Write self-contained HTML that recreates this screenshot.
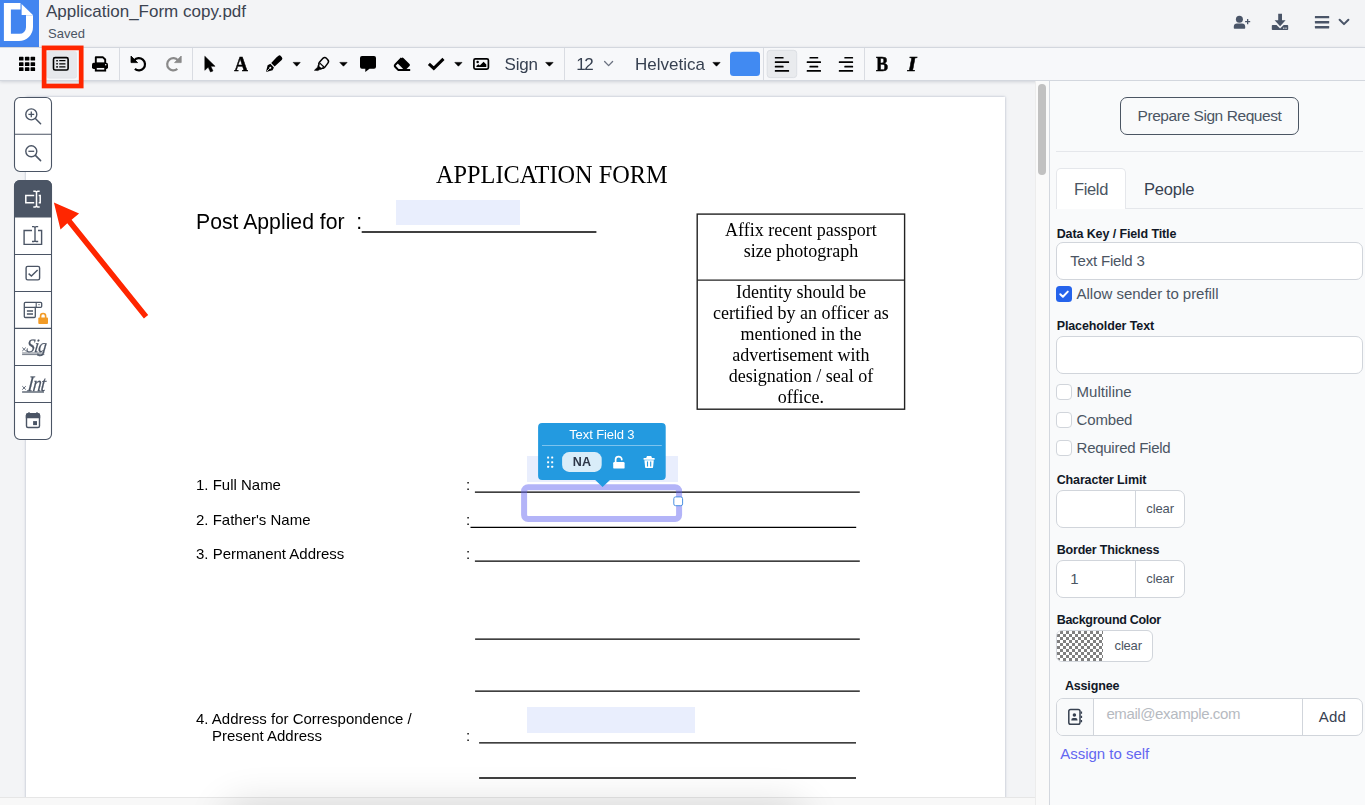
<!DOCTYPE html>
<html><head><meta charset="utf-8"><title>Application_Form copy.pdf</title>
<style>
*{box-sizing:border-box;margin:0;padding:0}
html,body{width:1365px;height:805px;overflow:hidden;background:#f3f4f6;font-family:"Liberation Sans",sans-serif;color:#374151}
svg{display:block;overflow:visible}
.a{position:absolute}
#hdr{position:absolute;left:0;top:0;width:1365px;height:47px;background:#f3f4f6}
#logo{position:absolute;left:0;top:0;width:39px;height:46.5px;background:#4285f0}
#title{position:absolute;left:46px;top:0px;font-size:17px;line-height:24px;color:#3b4351;white-space:nowrap}
#saved{position:absolute;left:48px;top:26.2px;font-size:13px;line-height:16px;color:#4b5563;white-space:nowrap}
#tb{z-index:5;position:absolute;left:0;top:47px;width:1365px;height:34px;background:#f7f8fa;border-top:1px solid #d3d7de;border-bottom:1px solid #d3d7de;box-shadow:0 1px 3px rgba(100,110,130,.25)}
.sep{position:absolute;top:0;width:1px;height:32px;background:#d9dce2}
.ic{position:absolute}
.tt{position:absolute;font-size:17px;line-height:20px;color:#374151;white-space:nowrap}
#main{position:absolute;left:0;top:81px;width:1035px;height:716px;background:#f3f4f6;overflow:hidden}
#page{position:absolute;left:26px;top:16px;width:979px;height:720px;background:#fff;box-shadow:0 0 2.5px rgba(110,120,150,.55)}
#vtrack{z-index:6;position:absolute;left:1035px;top:81px;width:14px;height:724px;background:#fafafa;border-left:1px solid #ececec}
#vthumb{z-index:7;position:absolute;left:1038px;top:84px;width:8px;height:91px;border-radius:4px;background:#c1c1c1}
#htrack{position:absolute;left:0;top:797px;width:1035px;height:8px;background:#f8f8f8;border-top:1px solid #e6e6e6}
#side{z-index:6;position:absolute;left:1049px;top:81px;width:316px;height:724px;background:#f9fafb;border-left:1px solid #d3d7de}
.doc{position:absolute;color:#000;white-space:nowrap;font-size:15px;line-height:18px}
.serif{font-family:"Liberation Serif",serif}
.ul{position:absolute;height:1.3px;background:#111}
</style></head><body>
<div id="hdr">
 <div id="logo"><svg width="39" height="47" viewBox="0 0 39 47"><path fill="#fff" d="M3.9 3H20.5V9.4H10.9V33.8H19.5A6.5 6.5 0 0 0 26 27.3V15.2H33V27A14 14 0 0 1 19 41H3.9Z"/><path fill="#fff" d="M21.6 4.1L32.9 14.9H21.6Z"/></svg></div>
 <div id="title">Application_Form copy.pdf</div>
 <div id="saved">Saved</div>
 <svg class="a" style="left:0;top:0" width="1365" height="47" viewBox="0 0 1365 47" fill="#4a5568">
  <circle cx="1239.4" cy="19.3" r="3.5"/>
  <path d="M1233.8 28.1V26.6A3.2 3.2 0 0 1 1237 23.5H1241.9A3.2 3.2 0 0 1 1245.2 26.6V28.1A.7.7 0 0 1 1244.5 28.8H1234.5A.7.7 0 0 1 1233.8 28.1Z"/>
  <path d="M1247 19.1H1248.3V21H1250.2V22.3H1248.3V24.2H1247V22.3H1245.1V21H1247Z"/>
  <path d="M1278.2 13.8H1282V20.2H1285.6L1280.1 26.3L1274.6 20.2H1278.2Z"/>
  <path d="M1272.6 25H1276.5L1280.1 28.4L1283.7 25H1287.4A.8.8 0 0 1 1288.2 25.8V29.3A.8.8 0 0 1 1287.4 30.1H1272.6A.8.8 0 0 1 1271.8 29.3V25.8A.8.8 0 0 1 1272.6 25Z"/>
  <rect x="1283.2" y="27.6" width="1.2" height="1.2" fill="#f3f4f6"/><rect x="1285.4" y="27.6" width="1.2" height="1.2" fill="#f3f4f6"/>
  <rect x="1314.9" y="15.9" width="14.3" height="2.4" rx=".4"/><rect x="1314.9" y="21" width="14.3" height="2.4" rx=".4"/><rect x="1314.9" y="26.1" width="14.3" height="2.4" rx=".4"/>
  <path d="M1339.6 19.7L1344 24.1L1348.4 19.7" fill="none" stroke="#4a5568" stroke-width="2" stroke-linecap="round" stroke-linejoin="round"/>
 </svg>
</div>
<div id="tb">
<div class="sep" style="left:119px"></div><div class="sep" style="left:192px"></div><div class="sep" style="left:564px"></div><div class="sep" style="left:763px"></div><div class="sep" style="left:864px"></div><svg class="a" style="left:0;top:-48px" width="1365" height="100" viewBox="0 0 1365 100"><rect x="46.6" y="51.8" width="30.4" height="26.6" rx="3" fill="#d4d7dd" opacity=".7"/><rect x="46.6" y="51" width="30.4" height="26.8" rx="3" fill="#e6e8ec"/>
<rect x="767.2" y="50.3" width="29.5" height="27.3" rx="3" fill="#e9ebee" stroke="#dcdfe4" stroke-width="1"/>
<rect x="19" y="56.8" width="4.5" height="3.8" rx=".6" fill="#000"/>
<rect x="19" y="62.2" width="4.5" height="3.8" rx=".6" fill="#000"/>
<rect x="19" y="67.3" width="4.5" height="3.8" rx=".6" fill="#000"/>
<rect x="24.9" y="56.8" width="4.5" height="3.8" rx=".6" fill="#000"/>
<rect x="24.9" y="62.2" width="4.5" height="3.8" rx=".6" fill="#000"/>
<rect x="24.9" y="67.3" width="4.5" height="3.8" rx=".6" fill="#000"/>
<rect x="30.6" y="56.8" width="4.5" height="3.8" rx=".6" fill="#000"/>
<rect x="30.6" y="62.2" width="4.5" height="3.8" rx=".6" fill="#000"/>
<rect x="30.6" y="67.3" width="4.5" height="3.8" rx=".6" fill="#000"/>
<rect x="53.5" y="57.6" width="14.6" height="12.4" rx="1.6" fill="none" stroke="#000" stroke-width="1.6"/>
<rect x="56.2" y="59.900000000000006" width="1.7" height="1.6" rx=".4" fill="#000"/><rect x="59.2" y="60.050000000000004" width="6.3" height="1.3" rx=".3" fill="#000"/>
<rect x="56.2" y="63.0" width="1.7" height="1.6" rx=".4" fill="#000"/><rect x="59.2" y="63.15" width="6.3" height="1.3" rx=".3" fill="#000"/>
<rect x="56.2" y="66.10000000000001" width="1.7" height="1.6" rx=".4" fill="#000"/><rect x="59.2" y="66.25" width="6.3" height="1.3" rx=".3" fill="#000"/>
<path d="M95.8 57.3H103L105.2 59.5V63.5H95.8Z" fill="#f7f8fa" stroke="#000" stroke-width="1.9" stroke-linejoin="round"/>
<rect x="92" y="62.8" width="16" height="6.1" rx="1.7" fill="#000"/>
<rect x="95.8" y="67" width="9.4" height="3.6" fill="#f7f8fa" stroke="#000" stroke-width="1.9"/>
<circle cx="105.7" cy="64.8" r=".75" fill="#f7f8fa"/>
<path d="M134.2 60.4A6.1 6.1 0 1 1 134.9 68.9" fill="none" stroke="#000" stroke-width="2.2" stroke-linecap="butt"/>
<path d="M131 56V62.6H137.6Z" fill="#000" stroke="#000" stroke-width=".8" stroke-linejoin="round"/>
<path d="M178 60.4A6.1 6.1 0 1 0 177.3 68.9" fill="none" stroke="#8a8a8a" stroke-width="2.2"/>
<path d="M181.2 56V62.6H174.6Z" fill="#8a8a8a" stroke="#8a8a8a" stroke-width=".8" stroke-linejoin="round"/>
<path d="M204.8 56.2V70.3L208.2 67.2L210.5 72L213 70.9L210.8 66.3H215.1Z" fill="#000" stroke="#000" stroke-width=".5" stroke-linejoin="round"/>
<path d="M276.6 57.2L278.2 55.9A2 2 0 0 1 281 56.2L281.9 57.3A2 2 0 0 1 281.7 60L274.6 66.6L271.2 63Z" fill="#000"/>
<path d="M270.4 63.8L273.9 67.4L272.6 70.3L266 72L267.6 65.3Z" fill="#000"/>
<path d="M266.6 71.4L269.8 68.2" stroke="#f7f8fa" stroke-width=".8"/><circle cx="270.3" cy="67.7" r="1" fill="#f7f8fa"/>
<path d="M293.2 62.4H300.2L296.7 66.2Z" fill="#000" stroke="#000" stroke-width=".6" stroke-linejoin="round"/>
<path d="M323.2 58.1L319.2 62.6A1.5 1.5 0 0 0 319 64.4L318.2 66.4L320.9 68.9L322.8 68A1.5 1.5 0 0 0 324.5 67.6L327.9 63.1A2.6 2.6 0 0 0 327.6 59.6L326.6 58.5A2.4 2.4 0 0 0 323.2 58.1Z" fill="none" stroke="#000" stroke-width="1.5" stroke-linejoin="round"/>
<path d="M318.6 66.2L321.2 68.7L317.8 70.6L314.4 70.3Z" fill="#000" stroke="#000" stroke-width=".6" stroke-linejoin="round"/>
<path d="M319.6 62.9L324.2 67.3" stroke="#000" stroke-width="1.2"/>
<path d="M339.8 62.4H347.1L343.45000000000005 66.2Z" fill="#000" stroke="#000" stroke-width=".6" stroke-linejoin="round"/>
<path d="M362 56H374A2 2 0 0 1 376 58V66.7A2 2 0 0 1 374 68.7H369.5L365.3 71.9V68.7H362A2 2 0 0 1 360 66.7V58A2 2 0 0 1 362 56Z" fill="#000"/>
<path d="M401.5 58.3L395.2 64.8A1.4 1.4 0 0 0 395.2 66.8L398.2 69.9H410.2" fill="none" stroke="#000" stroke-width="2" stroke-linejoin="round"/>
<path d="M401.4 57.9A1.4 1.4 0 0 1 403.4 57.9L409.5 64A1.4 1.4 0 0 1 409.5 66L405.5 69.9L397.4 62Z" fill="#000"/>
<path d="M397.6 62.3L405 69.6" stroke="#000" stroke-width="1.6"/>
<path d="M430 64.9L433.8 68.4L442.4 59.9" fill="none" stroke="#000" stroke-width="3" stroke-linejoin="miter" stroke-linecap="square"/>
<path d="M454.8 62.4H462L458.4 66.2Z" fill="#000" stroke="#000" stroke-width=".6" stroke-linejoin="round"/>
<rect x="473.9" y="58.8" width="14.5" height="10.3" rx="1.5" fill="none" stroke="#000" stroke-width="1.7"/>
<circle cx="477.6" cy="62" r="1.25" fill="#000"/><path d="M476.4 67.1V65.9L478.3 64.2L479.8 65.6L483.6 61.8L486.3 64.5V67.1Z" fill="#000"/>
<path d="M545.7 62.4H553.1L549.4000000000001 66.2Z" fill="#000" stroke="#000" stroke-width=".6" stroke-linejoin="round"/>
<path d="M604.6 61.5L608.6 65.6L612.6 61.5" fill="none" stroke="#6b7280" stroke-width="1.3" stroke-linecap="round" stroke-linejoin="round"/>
<path d="M712.9 62.4H720.1L716.5 66.2Z" fill="#000" stroke="#000" stroke-width=".6" stroke-linejoin="round"/>
<rect x="730" y="51.8" width="30" height="24.2" rx="3.5" fill="#418af2"/>
<rect x="774.80" y="56.9" width="8.8" height="1.7" rx=".5" fill="#000"/><rect x="774.80" y="61.3" width="14.3" height="1.7" rx=".5" fill="#000"/><rect x="774.80" y="65.7" width="8.8" height="1.7" rx=".5" fill="#000"/><rect x="774.80" y="70.0" width="14.3" height="1.7" rx=".5" fill="#000"/>
<rect x="809.45" y="56.9" width="8.8" height="1.7" rx=".5" fill="#000"/><rect x="806.70" y="61.3" width="14.3" height="1.7" rx=".5" fill="#000"/><rect x="809.45" y="65.7" width="8.8" height="1.7" rx=".5" fill="#000"/><rect x="806.70" y="70.0" width="14.3" height="1.7" rx=".5" fill="#000"/>
<rect x="844.30" y="56.9" width="8.8" height="1.7" rx=".5" fill="#000"/><rect x="838.80" y="61.3" width="14.3" height="1.7" rx=".5" fill="#000"/><rect x="844.30" y="65.7" width="8.8" height="1.7" rx=".5" fill="#000"/><rect x="838.80" y="70.0" width="14.3" height="1.7" rx=".5" fill="#000"/></svg><div class="tt" style="left:504.6px;top:6.5px;letter-spacing:-.25px">Sign</div>
<div class="tt" style="left:576.3px;top:6.5px;letter-spacing:-1.6px">12</div>
<div class="tt" style="left:635px;top:6.5px">Helvetica</div>
<div class="a serif" style="left:233px;top:3px;font-size:21px;line-height:26px;font-weight:bold;color:#000;width:16px;text-align:center;-webkit-text-stroke:.5px #000;transform:scaleX(.9)">A</div>
<div class="a serif" style="left:874px;top:3px;font-size:21px;line-height:26px;font-weight:bold;color:#000;width:16px;text-align:center;-webkit-text-stroke:.5px #000;transform:scaleX(.86)">B</div>
<div class="a serif" style="left:904px;top:3px;font-size:21px;line-height:26px;font-weight:bold;font-style:italic;color:#000;width:16px;text-align:center;-webkit-text-stroke:.5px #000;transform:scaleX(1.1)">I</div>
</div>
<div id="main">
 <div id="page">
<div id="pc" class="a" style="left:-26px;top:-97px;width:0;height:0;will-change:transform">
<div class="a" style="left:396px;top:199.5px;width:124.2px;height:25.5px;background:#e9eefd"></div>
<div class="a" style="left:527px;top:456px;width:151px;height:25.7px;background:#e9eefd"></div>
<div class="a" style="left:527px;top:707px;width:168px;height:25.5px;background:#e9eefd"></div>
<div class="doc serif" id="t1" style="left:436px;top:163.00px;font-size:24.3px;line-height:24.3px;">APPLICATION FORM</div>
<div class="doc " id="t2" style="transform:scaleX(.976);transform-origin:0 50%;left:196.1px;top:211.48px;font-size:21.74px;line-height:21.74px;">Post Applied for&nbsp; :</div>
<svg class="a" style="left:0;top:0" width="1000" height="805" viewBox="0 0 1000 805"><path d="M361.7 231.95H596.4" stroke="#000" stroke-width="1.6"/><path d="M474.9 492.10H859.8" stroke="#000" stroke-width="1.3"/><path d="M470.5 527.40H856.2" stroke="#000" stroke-width="1.3"/><path d="M474.9 561.10H859.8" stroke="#000" stroke-width="1.3"/><path d="M475.1 639.15H859.8" stroke="#000" stroke-width="1.3"/><path d="M475.1 691.10H859.8" stroke="#000" stroke-width="1.3"/><path d="M479.1 742.90H856.0" stroke="#000" stroke-width="1.3"/><path d="M479.1 778.00H856.0" stroke="#000" stroke-width="1.3"/></svg>
<svg class="a" style="left:690px;top:205px" width="225" height="215" viewBox="690 205 225 215"><rect x="697.2" y="214.1" width="207.4" height="195.1" fill="none" stroke="#222" stroke-width="1.4"/><path d="M697.2 280.2H904.6" stroke="#222" stroke-width="1.3"/></svg>

<div class="doc serif bx" style="left:696.5px;width:208.8px;text-align:center;top:220.73px;font-size:18px;line-height:18px">Affix recent passport</div>
<div class="doc serif bx" style="left:696.5px;width:208.8px;text-align:center;top:241.62px;font-size:18px;line-height:18px">size photograph</div>
<div class="doc serif bx" style="left:696.5px;width:208.8px;text-align:center;top:283.32px;font-size:18px;line-height:18px">Identity should be</div>
<div class="doc serif bx" style="left:696.5px;width:208.8px;text-align:center;top:304.23px;font-size:18px;line-height:18px">certified by an officer as</div>
<div class="doc serif bx" style="left:696.5px;width:208.8px;text-align:center;top:325.12px;font-size:18px;line-height:18px">mentioned in the</div>
<div class="doc serif bx" style="left:696.5px;width:208.8px;text-align:center;top:346.03px;font-size:18px;line-height:18px">advertisement with</div>
<div class="doc serif bx" style="left:696.5px;width:208.8px;text-align:center;top:366.93px;font-size:18px;line-height:18px">designation / seal of</div>
<div class="doc serif bx" style="left:696.5px;width:208.8px;text-align:center;top:387.82px;font-size:18px;line-height:18px">office.</div>
<div class="doc " id="t3" style="transform:scaleX(.966);transform-origin:0 50%;left:196.2px;top:476.66px;font-size:15.52px;line-height:15.52px;">1. Full Name</div>
<div class="doc " id="t4" style="transform:scaleX(.966);transform-origin:0 50%;left:195.7px;top:512.36px;font-size:15.52px;line-height:15.52px;">2. Father's Name</div>
<div class="doc " id="t5" style="transform:scaleX(.966);transform-origin:0 50%;left:195.7px;top:546.36px;font-size:15.52px;line-height:15.52px;">3. Permanent Address</div>
<div class="doc " id="t6" style="transform:scaleX(.966);transform-origin:0 50%;left:195.5px;top:710.96px;font-size:15.52px;line-height:15.52px;">4. Address for Correspondence /</div>
<div class="doc " id="t7" style="transform:scaleX(.966);transform-origin:0 50%;left:212.2px;top:727.66px;font-size:15.52px;line-height:15.52px;">Present Address</div>
<div class="doc "  style="transform:scaleX(.966);transform-origin:0 50%;left:465.9px;top:476.66px;font-size:15.52px;line-height:15.52px;">:</div>
<div class="doc "  style="transform:scaleX(.966);transform-origin:0 50%;left:465.9px;top:512.36px;font-size:15.52px;line-height:15.52px;">:</div>
<div class="doc "  style="transform:scaleX(.966);transform-origin:0 50%;left:465.9px;top:546.36px;font-size:15.52px;line-height:15.52px;">:</div>
<div class="doc "  style="transform:scaleX(.966);transform-origin:0 50%;left:465.9px;top:727.66px;font-size:15.52px;line-height:15.52px;">:</div>
</div>
 </div>
<svg class="a" style="left:0;top:-81px" width="200" height="805" viewBox="0 0 200 805"><rect x="14.5" y="97.5" width="37" height="74" rx="5.5" fill="#fff" stroke="#4b5565" stroke-width="1.1"/>
<path d="M14.5 134.2H51.5" stroke="#4b5565" stroke-width="1.1"/>
<circle cx="31.3" cy="114.4" r="5.5" fill="none" stroke="#4b5565" stroke-width="1.4"/><path d="M35.4 118.5L40.6 123.7" stroke="#4b5565" stroke-width="1.5" stroke-linecap="round"/>
<path d="M28.4 114.4H34.2" stroke="#4b5565" stroke-width="1.3"/>
<circle cx="31.3" cy="151.3" r="5.5" fill="none" stroke="#4b5565" stroke-width="1.4"/><path d="M35.4 155.4L40.6 160.60000000000002" stroke="#4b5565" stroke-width="1.5" stroke-linecap="round"/>
<path d="M28.4 151.3H34.2" stroke="#4b5565" stroke-width="1.3"/>
<path d="M31.3 111.5V117.3" stroke="#4b5565" stroke-width="1.3"/>
<rect x="14.5" y="180.5" width="37" height="259" rx="5.5" fill="#fff" stroke="#4b5565" stroke-width="1.1"/>
<path d="M14 217.5V186A6 6 0 0 1 20 180H46A6 6 0 0 1 52 186V217.5Z" fill="#4b5565"/>
<path d="M14.5 254.5H51.5" stroke="#4b5565" stroke-width="1.1"/>
<path d="M14.5 291.5H51.5" stroke="#4b5565" stroke-width="1.1"/>
<path d="M14.5 328.4H51.5" stroke="#4b5565" stroke-width="1.1"/>
<path d="M14.5 365.5H51.5" stroke="#4b5565" stroke-width="1.1"/>
<path d="M14.5 402.5H51.5" stroke="#4b5565" stroke-width="1.1"/>
<path d="M34.2 195.4H25.8V202.7H34.2M38.7 195.4H40.2V202.7H38.7" fill="none" stroke="#fff" stroke-width="1.5"/>
<path d="M36.5 191.6V206.6M33.3 191.3H35.3Q36.5 191.5 36.5 192.6Q36.5 191.5 37.7 191.3H39.7M33.3 206.9H35.3Q36.5 206.7 36.5 205.6Q36.5 206.7 37.7 206.9H39.7" fill="none" stroke="#fff" stroke-width="1.5"/>
<path d="M32 230.5H24.1V244.4H41.6V230.5H38" fill="none" stroke="#4b5565" stroke-width="1.4"/>
<path d="M35 226.9V241.2M32 226.6H33.9Q35 226.8 35 227.9Q35 226.8 36.1 226.6H38.2M32 241.5H33.9Q35 241.3 35 240.2Q35 241.3 36.1 241.5H38.2" fill="none" stroke="#4b5565" stroke-width="1.4"/>
<rect x="26.1" y="266.4" width="13.5" height="13.5" rx="1.6" fill="none" stroke="#4b5565" stroke-width="1.4"/><path d="M28.6 273.6L31.4 276L37.6 269.9" fill="none" stroke="#4b5565" stroke-width="1.4"/>
<path d="M25.4 302.3H40.6A1.1 1.1 0 0 1 41.7 303.4V306.3A1.1 1.1 0 0 1 40.6 307.4H35.3V316.4A1.1 1.1 0 0 1 34.2 317.5H25.4A1.1 1.1 0 0 1 24.3 316.4V303.4A1.1 1.1 0 0 1 25.4 302.3Z" fill="none" stroke="#4b5565" stroke-width="1.3"/>
<path d="M24.3 307.4H35.3M36.2 302.3V307.4" stroke="#4b5565" stroke-width="1.1"/><path d="M26.9 311H33M26.9 314H33" stroke="#4b5565" stroke-width="1.4"/><path d="M38 304.2H40L39 305.6Z" fill="#4b5565"/>
<rect x="38.3" y="317.5" width="9.7" height="6.4" rx=".9" fill="#f29b26"/><path d="M40.6 318V316A2.5 2.5 0 0 1 45.6 316V318" fill="none" stroke="#f29b26" stroke-width="1.6"/>
<path d="M22.1 353H44.3M22.1 354.6H44.3" stroke="#4b5565" stroke-width=".8"/>
<path d="M22.1 392H44" stroke="#4b5565" stroke-width="1.3"/>
<path d="M22.3 347.6L25.8 351M25.8 347.6L22.3 351M22.3 386.2L25.8 389.6M25.8 386.2L22.3 389.6" stroke="#4b5565" stroke-width=".9"/>
<rect x="26.5" y="414" width="13" height="13.5" rx="1.5" fill="none" stroke="#4b5565" stroke-width="1.4"/><path d="M26.5 417.6V415.2A1.4 1.4 0 0 1 27.9 413.8H38.1A1.4 1.4 0 0 1 39.5 415.2V417.6Z" fill="#4b5565" stroke="#4b5565" stroke-width="1.4"/><path d="M29 412.2V415M37 412.2V415" stroke="#4b5565" stroke-width="1.5"/><rect x="33.1" y="421.1" width="3.9" height="4" fill="#4b5565"/></svg><div class="a serif" style="left:25.6px;top:255.2px;font-size:19px;line-height:20px;font-style:italic;color:#4b5565;letter-spacing:-.7px;white-space:nowrap;transform:scaleX(.88) skewX(-8deg);transform-origin:0 80%;-webkit-text-stroke:.25px #4b5565">Sig</div><div class="a serif" style="left:26.6px;top:291.6px;font-size:22px;line-height:22px;font-style:italic;color:#4b5565;letter-spacing:-.8px;white-space:nowrap;transform:scaleX(.8) skewX(-8deg);transform-origin:0 80%;-webkit-text-stroke:.25px #4b5565">Int</div>
</div>
<div id="htrack"></div>
<div id="botsh" class="a" style="left:235px;top:814px;width:560px;height:30px;border-radius:8px;box-shadow:0 0 40px 10px rgba(0,0,0,.14);z-index:9"></div>
<div id="vtrack"></div><div id="vthumb"></div>
<div id="side">
<!--SIDE--><div class="a" style="left:-1050px;top:-81px;width:0;height:0">
<div class="a" style="left:1120px;top:97px;width:179.0px;height:38.0px;border:1px solid #4b5563;border-radius:7px;background:#f9fafb"></div>
<div class="a st" id="s1" style="left:1137.5px;top:108.08px;font-size:15.5px;line-height:15.5px;font-weight:normal;color:#4b5563;white-space:nowrap;letter-spacing:-0.43px">Prepare Sign Request</div>
<div class="a" style="left:1056px;top:150.7px;width:307.0px;height:1.0px;background:#e5e7eb"></div>
<div class="a" style="left:1056px;top:208.4px;width:307.0px;height:1.0px;background:#e5e7eb"></div>
<div class="a" style="left:1056px;top:168px;width:70.0px;height:41.4px;background:#fff;border:1px solid #e5e7eb;border-bottom:none;border-radius:5px 5px 0 0"></div>
<div class="a st" id="s2" style="left:1074px;top:180.93px;font-size:16.5px;line-height:16.5px;font-weight:normal;color:#4b5563;white-space:nowrap;letter-spacing:-0.35px">Field</div>
<div class="a st" id="s3" style="left:1144px;top:180.93px;font-size:16.5px;line-height:16.5px;font-weight:normal;color:#374151;white-space:nowrap;letter-spacing:-0.17px">People</div>
<div class="a st" id="s4" style="left:1056.7px;top:228.32px;font-size:12.5px;line-height:12.5px;font-weight:bold;color:#111827;white-space:nowrap;letter-spacing:-0.11px">Data Key / Field Title</div>
<div class="a" style="left:1056px;top:242px;width:307.0px;height:38.0px;background:#fff;border:1px solid #d1d5db;border-radius:7px"></div>
<div class="a st" id="s5" style="left:1070.3px;top:253.20px;font-size:15px;line-height:15px;font-weight:normal;color:#4b5563;white-space:nowrap;letter-spacing:-0.20px">Text Field 3</div>
<div class="a" style="left:1056px;top:286px;width:16px;height:16px;background:#2563eb;border-radius:3.5px"><svg width="16" height="16" viewBox="0 0 16 16"><path d="M4.3 8.2L6.9 10.7L11.8 5.6" fill="none" stroke="#fff" stroke-width="2" stroke-linecap="round" stroke-linejoin="round"/></svg></div>
<div class="a st" id="s6" style="left:1076.6px;top:286.20px;font-size:15px;line-height:15px;font-weight:normal;color:#4b5563;white-space:nowrap;letter-spacing:-0.03px">Allow sender to prefill</div>
<div class="a st" id="s7" style="left:1056.7px;top:320.22px;font-size:12.5px;line-height:12.5px;font-weight:bold;color:#111827;white-space:nowrap;letter-spacing:-0.11px">Placeholder Text</div>
<div class="a" style="left:1056px;top:336px;width:307.0px;height:38.0px;background:#fff;border:1px solid #d1d5db;border-radius:7px"></div>
<div class="a" style="left:1056px;top:384px;width:16.0px;height:16.0px;background:#fff;border:1px solid #d1d5db;border-radius:4px"></div>
<div class="a st" id="s8" style="left:1076.6px;top:383.90px;font-size:15px;line-height:15px;font-weight:normal;color:#4b5563;white-space:nowrap;letter-spacing:0.01px">Multiline</div>
<div class="a" style="left:1056px;top:412px;width:16.0px;height:16.0px;background:#fff;border:1px solid #d1d5db;border-radius:4px"></div>
<div class="a st" id="s9" style="left:1076.6px;top:411.90px;font-size:15px;line-height:15px;font-weight:normal;color:#4b5563;white-space:nowrap;letter-spacing:-0.18px">Combed</div>
<div class="a" style="left:1056px;top:440px;width:16.0px;height:16.0px;background:#fff;border:1px solid #d1d5db;border-radius:4px"></div>
<div class="a st" id="s10" style="left:1076.6px;top:439.90px;font-size:15px;line-height:15px;font-weight:normal;color:#4b5563;white-space:nowrap;letter-spacing:-0.27px">Required Field</div>
<div class="a st" id="s11" style="left:1056.7px;top:474.32px;font-size:12.5px;line-height:12.5px;font-weight:bold;color:#111827;white-space:nowrap;letter-spacing:-0.14px">Character Limit</div>
<div class="a" style="left:1056px;top:490px;width:129.0px;height:38.0px;background:#fff;border:1px solid #d1d5db;border-radius:7px"></div>
<div class="a" style="left:1135px;top:490px;width:1.0px;height:38.0px;background:#d1d5db"></div>
<div class="a st" id="s12" style="left:1146.3px;top:501.80px;font-size:13px;line-height:13px;font-weight:normal;color:#4b5563;white-space:nowrap;letter-spacing:-0.12px">clear</div>
<div class="a st" id="s13" style="left:1056.7px;top:544.12px;font-size:12.5px;line-height:12.5px;font-weight:bold;color:#111827;white-space:nowrap;letter-spacing:-0.19px">Border Thickness</div>
<div class="a" style="left:1056px;top:560px;width:129.0px;height:38.0px;background:#fff;border:1px solid #d1d5db;border-radius:7px"></div>
<div class="a" style="left:1135px;top:560px;width:1.0px;height:38.0px;background:#d1d5db"></div>
<div class="a st" id="s14" style="left:1070.3px;top:571.10px;font-size:15px;line-height:15px;font-weight:normal;color:#4b5563;white-space:nowrap;letter-spacing:0.00px">1</div>
<div class="a st" id="s15" style="left:1146.3px;top:571.80px;font-size:13px;line-height:13px;font-weight:normal;color:#4b5563;white-space:nowrap;letter-spacing:-0.12px">clear</div>
<div class="a st" id="s16" style="left:1056.7px;top:614.42px;font-size:12.5px;line-height:12.5px;font-weight:bold;color:#111827;white-space:nowrap;letter-spacing:-0.30px">Background Color</div>
<div class="a" style="left:1056px;top:630px;width:97.0px;height:32.0px;background:#fff;border:1px solid #d1d5db;border-radius:6px"></div>
<div class="a" style="left:1057px;top:631px;width:46.0px;height:30.0px;border-radius:5px 0 0 5px;background-color:#fff;background-image:linear-gradient(45deg,#808080 25%,transparent 25%,transparent 75%,#808080 75%),linear-gradient(45deg,#808080 25%,transparent 25%,transparent 75%,#808080 75%);background-size:6px 6px;background-position:0 0,3px 3px"></div>
<div class="a st" id="s17" style="left:1114.6px;top:638.60px;font-size:13px;line-height:13px;font-weight:normal;color:#4b5563;white-space:nowrap;letter-spacing:-0.20px">clear</div>
<div class="a st" id="s18" style="left:1064.9px;top:680.02px;font-size:12.5px;line-height:12.5px;font-weight:bold;color:#111827;white-space:nowrap;letter-spacing:-0.15px">Assignee</div>
<div class="a" style="left:1056px;top:698px;width:307.0px;height:38.0px;background:#fff;border:1px solid #d1d5db;border-radius:7px"></div>
<div class="a" style="left:1057px;top:699px;width:36.0px;height:36.0px;background:#f9fafb;border-radius:6px 0 0 6px"></div>
<div class="a" style="left:1093px;top:698px;width:1.0px;height:38.0px;background:#d1d5db"></div>
<div class="a" style="left:1302px;top:698px;width:1.0px;height:38.0px;background:#d1d5db"></div>
<svg class="a" style="left:1066px;top:706px" width="20" height="22" viewBox="1066 706 20 22"><rect x="1068.8" y="709.5" width="11.2" height="14.8" rx="1.8" fill="none" stroke="#374151" stroke-width="1.5"/><circle cx="1074.4" cy="714.9" r="1.75" fill="#374151"/><path d="M1071.3 720.6V719.9A1.9 1.9 0 0 1 1073.2 718H1075.6A1.9 1.9 0 0 1 1077.5 719.9V720.6Z" fill="#374151"/><path d="M1081.4 711.6V713.8M1081.4 715.8V718M1081.4 720V722.2" stroke="#374151" stroke-width="1.4"/></svg>
<div class="a st" id="s19" style="left:1106.4px;top:706.30px;font-size:15px;line-height:15px;font-weight:normal;color:#b6bac1;white-space:nowrap;letter-spacing:-0.39px">email@example.com</div>
<div class="a st" id="s20" style="left:1318.8px;top:709.00px;font-size:15px;line-height:15px;font-weight:normal;color:#374151;white-space:nowrap;letter-spacing:0.23px">Add</div>
<div class="a st" id="s21" style="left:1060.2px;top:746.40px;font-size:15px;line-height:15px;font-weight:normal;color:#6366f1;white-space:nowrap;letter-spacing:-0.01px">Assign to self</div>
</div><!--/SIDE-->
</div>
<!--OVERLAY--><svg class="a" style="left:0;top:0;z-index:10;pointer-events:none" width="1365" height="805" viewBox="0 0 1365 805">
<rect x="44.1" y="47.9" width="37.1" height="38.1" fill="none" stroke="#ff2600" stroke-width="4.7"/>
<path d="M53.9 202.5L79.1 213.5L71.6 219.7L148.2 315.1L143.9 318.6L67.3 223.2L60.5 229.6Z" fill="#ff2600"/>
<rect x="524.1" y="487.3" width="155" height="31.8" rx="4" fill="none" stroke="rgba(99,102,241,.49)" stroke-width="6"/>
<rect x="673.8" y="496.9" width="8.8" height="8.8" rx="1.8" fill="#fff" stroke="#4a90e2" stroke-width="1"/>
<path d="M542.1 423.1H661.7A4 4 0 0 1 665.7 427.1V476A4 4 0 0 1 661.7 480H610L602.6 487L595.2 480H542.1A4 4 0 0 1 538.1 476V427.1A4 4 0 0 1 542.1 423.1Z" fill="#239ae0"/>
<path d="M542 445.5H661.8" stroke="#7cc3ee" stroke-width="1"/>
<rect x="547.1" y="456.6" width="2" height="2" rx=".5" fill="#fff"/>
<rect x="547.1" y="461.2" width="2" height="2" rx=".5" fill="#fff"/>
<rect x="547.1" y="465.8" width="2" height="2" rx=".5" fill="#fff"/>
<rect x="551.2" y="456.6" width="2" height="2" rx=".5" fill="#fff"/>
<rect x="551.2" y="461.2" width="2" height="2" rx=".5" fill="#fff"/>
<rect x="551.2" y="465.8" width="2" height="2" rx=".5" fill="#fff"/>
<rect x="562.1" y="452.1" width="39.6" height="19.8" rx="7" fill="#d9edf9"/>
<rect x="613.2" y="462" width="11.4" height="6.6" rx="1.2" fill="#fff"/><path d="M615.6 462V459.8A3.1 3.1 0 0 1 621.8 459.6" fill="none" stroke="#fff" stroke-width="1.7" stroke-linecap="round"/>
<path d="M643.6 458.1H654.6V459.8H643.6ZM647 456.1H651.2L652 458.1H646.2ZM644.4 460.3H653.8L653.1 466.9A1.3 1.3 0 0 1 651.8 468.1H646.4A1.3 1.3 0 0 1 645.1 466.9Z" fill="#fff"/>
<path d="M647.5 461.6V466.6M650.7 461.6V466.6" stroke="#239ae0" stroke-width="1.1"/>
</svg>
<div class="a" style="z-index:11;left:538px;top:428.2px;width:127.7px;text-align:center;font-size:13px;line-height:13px;color:#fff;white-space:nowrap;letter-spacing:-.1px">Text Field 3</div>
<div class="a" style="z-index:11;left:562.1px;top:456.2px;width:39.6px;text-align:center;font-size:12.5px;line-height:13px;font-weight:bold;color:#2d3748;white-space:nowrap">NA</div><!--/OVERLAY-->
</body></html>
